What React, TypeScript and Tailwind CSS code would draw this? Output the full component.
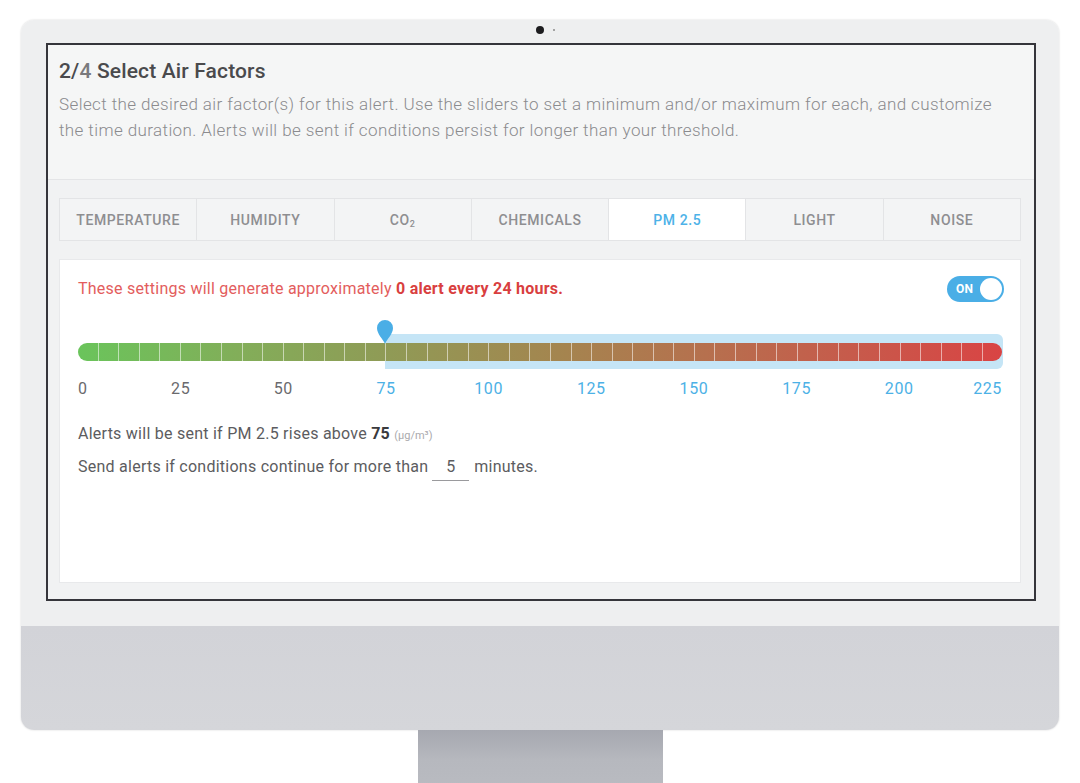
import React from "react";

const tabs = ["TEMPERATURE", "HUMIDITY", "CO2", "CHEMICALS", "PM 2.5", "LIGHT", "NOISE"];
const labels = [0, 25, 50, 75, 100, 125, 150, 175, 200, 225];

export default function App() {
  return (
    <div
      className="w-[1080px] h-[783px] bg-white pt-[20px] pl-[21px] overflow-hidden"
      style={{ fontFamily: "Roboto, 'Noto Sans', Arial, sans-serif" }}
    >
      <div className="w-[1038px] flex flex-col items-center">
        <div className="w-full rounded-[13px] overflow-hidden shadow-[0_0_2px_rgba(0,0,0,0.18)]">
          {/* bezel */}
          <div className="relative bg-[#eeeff0] pt-[23px] pl-[25px] pr-[23px] pb-[25px]">
            <div className="absolute left-[515px] top-[6px] w-[8px] h-[8px] rounded-full bg-[#1c1c1e]" />
            <div className="absolute left-[532px] top-[9px] w-[2px] h-[2px] rounded-full bg-[#8a8a8a]" />
            {/* screen */}
            <div className="h-[558px] border-2 border-[#35353b] bg-[#f1f2f3] flex flex-col">
              {/* header */}
              <div className="h-[135px] bg-[#f5f6f6] border-b border-[#e4e5e7] pt-[12px] px-[11px]">
                <h1 className="text-[21px] leading-[28px] font-medium tracking-[0.15px] text-[#4a4a4d]">
                  2/<span className="text-[#7a7a7d]">4</span> Select Air Factors
                </h1>
                <p className="mt-[6px] text-[17px] leading-[26px] font-light tracking-[0.4px] text-[#8b8b8e] whitespace-nowrap">
                  Select the desired air factor(s) for this alert. Use the sliders to set a minimum and/or maximum for each, and customize
                  <br />
                  the time duration. Alerts will be sent if conditions persist for longer than your threshold.
                </p>
              </div>
              {/* lower */}
              <div className="flex-1 pt-[18px] pl-[11px] pr-[13px] pb-[16px] flex flex-col gap-[18px]">
                <div className="h-[43px] flex border border-[#e3e4e6] bg-[#f3f4f5]">
                  {tabs.map((t, i) => {
                    const active = t === "PM 2.5";
                    return (
                      <div
                        key={t}
                        className={`flex-1 flex items-center justify-center pt-[2px] text-[14px] font-medium tracking-[0.6px] ${
                          i > 0 ? "border-l border-[#e3e4e6]" : ""
                        } ${active ? "bg-white text-[#4db2e8]" : "text-[#8e8e91]"}`}
                      >
                        {t === "CO2" ? (
                          <span>
                            CO<span className="text-[9px] align-[-2px]">2</span>
                          </span>
                        ) : (
                          t
                        )}
                      </div>
                    );
                  })}
                </div>
                {/* card */}
                <div className="flex-1 bg-white border border-[#e8e9eb] pl-[18px] pr-[16px] pt-[16px]">
                  <div className="flex items-center justify-between h-[26px]">
                    <div className="text-[16px] text-[#e35d5d] leading-[20px] tracking-[0.25px] -mt-[1px]">
                      These settings will generate approximately{" "}
                      <span className="font-bold text-[#d93f3f]">0 alert every 24 hours.</span>
                    </div>
                    <div className="w-[57px] h-[26px] rounded-full bg-[#4aaee6] flex items-center justify-between pl-[9px] pr-[2px]">
                      <span className="text-white text-[12px] font-bold tracking-[0.3px]">ON</span>
                      <span className="w-[22px] h-[22px] rounded-full bg-white" />
                    </div>
                  </div>
                  {/* slider */}
                  <div className="relative mt-[18px] h-[49px] w-[924px]">
                    <div className="absolute left-[307px] right-[-1px] top-[14px] h-[35px] bg-[#c5e5f6] rounded-r-[6px]" />
                    <div
                      className="absolute left-0 top-[23px] w-[924px] h-[18px] rounded-full overflow-hidden flex"
                      style={{
                        background:
                          "linear-gradient(to right, #6ac45b 0%, #83ad59 18%, #8f9b56 33%, #a4854f 52%, #b6704e 68%, #c75a4b 84%, #d94444 100%)",
                      }}
                    >
                      {Array.from({ length: 45 }).map((_, i) => (
                        <div
                          key={i}
                          className={`flex-1 h-full ${i > 0 ? "border-l border-[rgba(255,255,255,0.55)]" : ""}`}
                        />
                      ))}
                    </div>
                    <svg
                      className="absolute left-[299px] top-0"
                      width="16"
                      height="24"
                      viewBox="0 0 16 24"
                    >
                      <path d="M8 24 C6 19 0 14 0 8 A8 8 0 0 1 16 8 C16 14 10 19 8 24 Z" fill="#4aaee6" />
                    </svg>
                  </div>
                  {/* labels */}
                  <div className="mt-[10px] w-[924px] flex justify-between text-[16px] leading-[20px] tracking-[0.6px]">
                    {labels.map((l, i) => (
                      <div
                        key={l}
                        className={`w-0 flex whitespace-nowrap ${
                          i === 0 ? "justify-start" : i === labels.length - 1 ? "justify-end" : "justify-center"
                        } ${l >= 75 ? "text-[#4cb1e6]" : "text-[#6a6a6d]"}`}
                      >
                        {l}
                      </div>
                    ))}
                  </div>
                  <div className="mt-[25px] text-[16px] leading-[20px] tracking-[0.25px] text-[#5c5c60]">
                    Alerts will be sent if PM 2.5 rises above{" "}
                    <span className="font-bold text-[#3a3a3d]">75</span>{" "}
                    <span className="text-[11px] tracking-normal text-[#aaaaad]">(µg/m³)</span>
                  </div>
                  <div className="mt-[11px] text-[16px] leading-[20px] tracking-[0.25px] text-[#5c5c60] flex items-start">
                    <span>Send alerts if conditions continue for more than</span>
                    <span className="ml-[4px] w-[37px] border-b border-[#9a9a9d] text-center pb-[3px] leading-[20px]">
                      5
                    </span>
                    <span className="ml-[5px]">minutes.</span>
                  </div>
                </div>
              </div>
            </div>
          </div>
          {/* chin */}
          <div className="h-[104px] bg-gradient-to-b from-[#d2d3d8] to-[#d5d6da]" />
        </div>
        {/* stand */}
        <div className="w-[245px] h-[60px] bg-gradient-to-b from-[#a6a8b0] via-[#b6b8be] to-[#b9bbc1]" />
      </div>
    </div>
  );
}
